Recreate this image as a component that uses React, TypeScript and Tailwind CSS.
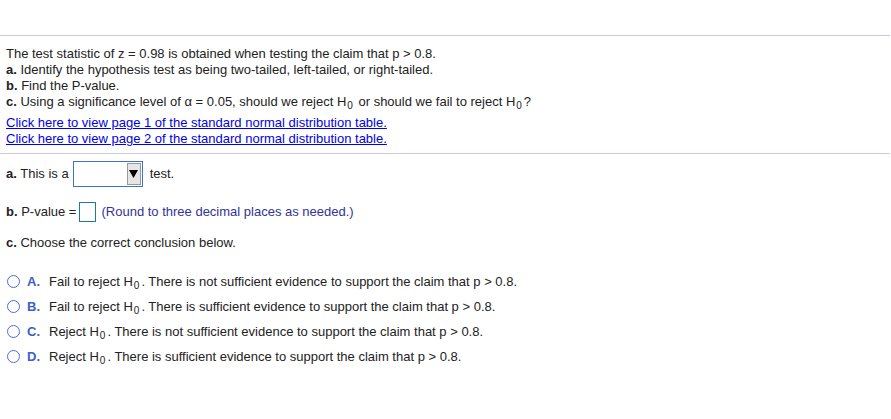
import React from "react";

const H0 = () => (
  <span>
    H<sub className="text-[10px] relative top-[3px] align-baseline ml-[1px] mr-[2px]">0</sub>
  </span>
);

const Option = ({ letter, children }: { letter: string; children: React.ReactNode }) => (
  <div className="flex items-center h-[25px]">
    <span className="w-[13px] h-[13px] rounded-full border-[1.5px] border-[#4a6fd6] ml-[7px] mr-[7px]" />
    <span className="font-bold text-[#3b5fc4] w-[22px]">{letter}.</span>
    <span>{children}</span>
  </div>
);

export default function App() {
  return (
    <div
      className="w-[891px] h-[419px] bg-white text-[13px] text-[#222] leading-[16px]"
      style={{ fontFamily: '"Liberation Sans", Arial, sans-serif' }}
    >
      <div className="h-[35px]" />
      <div className="border-t border-[#c8ccd8] w-[890px] pl-[6px] pt-[10px] pb-[6px]">
        <div>The test statistic of z = 0.98 is obtained when testing the claim that p &gt; 0.8.</div>
        <div>
          <b>a.</b> Identify the hypothesis test as being two-tailed, left-tailed, or right-tailed.
        </div>
        <div>
          <b>b.</b> Find the P-value.
        </div>
        <div>
          <b>c.</b> Using a significance level of α = 0.05, should we reject <H0 /> or should we fail to reject <H0 />?
        </div>
        <div className="mt-[5px] text-[#0000ee] underline">
          <div>Click here to view page 1 of the standard normal distribution table.</div>
          <div>Click here to view page 2 of the standard normal distribution table.</div>
        </div>
      </div>
      <div className="border-t border-[#c8ccd8] w-[890px] pl-[6px]">
        <div className="flex items-center mt-[7px] h-[26px]">
          <span>
            <b>a.</b> This is a
          </span>
          <span className="ml-[4px] w-[70px] h-[26px] border border-[#3d6fd4] flex justify-end items-center pr-[1px]">
            <span className="w-[14px] h-[22px] bg-[#e6e6e6] border border-[#999] flex items-center justify-center">
              <svg width="9" height="8" viewBox="0 0 9 8">
                <path d="M0 0 L9 0 L4.5 8 Z" fill="#000" />
              </svg>
            </span>
          </span>
          <span className="ml-[7px]">test.</span>
        </div>
        <div className="flex items-center mt-[15px] h-[20px]">
          <span>
            <b>b.</b> P-value =
          </span>
          <span className="ml-[3px] w-[17px] h-[20px] border border-[#1d7a9a]" />
          <span className="ml-[5px] text-[#333399]">(Round to three decimal places as needed.)</span>
        </div>
        <div className="mt-[13px]">
          <b>c.</b> Choose the correct conclusion below.
        </div>
        <div className="mt-[18px] -ml-[6px]">
          <Option letter="A">
            Fail to reject <H0 />. There is not sufficient evidence to support the claim that p &gt; 0.8.
          </Option>
          <Option letter="B">
            Fail to reject <H0 />. There is sufficient evidence to support the claim that p &gt; 0.8.
          </Option>
          <Option letter="C">
            Reject <H0 />. There is not sufficient evidence to support the claim that p &gt; 0.8.
          </Option>
          <Option letter="D">
            Reject <H0 />. There is sufficient evidence to support the claim that p &gt; 0.8.
          </Option>
        </div>
      </div>
    </div>
  );
}
